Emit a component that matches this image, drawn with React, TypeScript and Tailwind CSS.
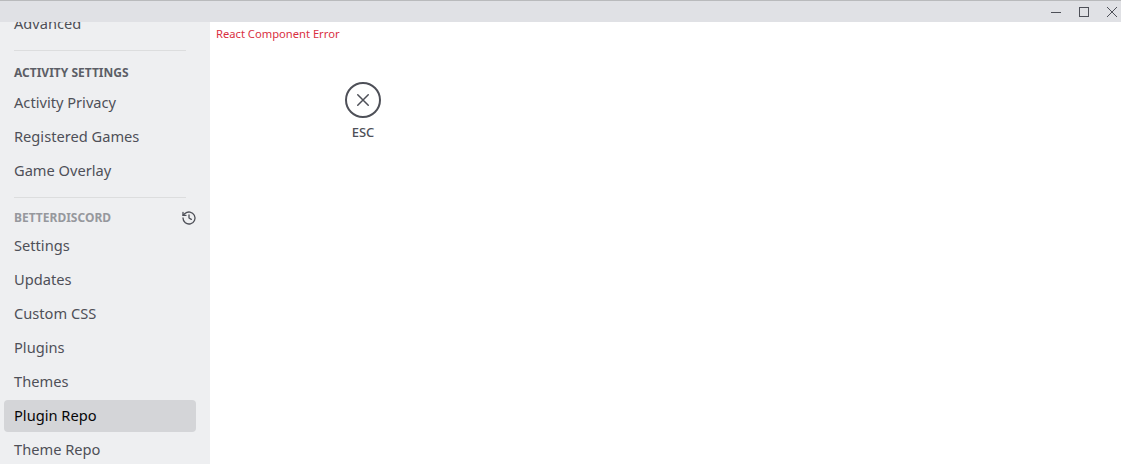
import React from 'react';

const NavItem: React.FC<{ label: string; active?: boolean }> = ({ label, active }) => (
  <div
    className={`h-8 mb-0.5 mr-3.5 ml-1 pl-2.5 pb-px flex items-center rounded text-[14.65px] shrink-0 ${
      active ? 'bg-[#d4d5d8] text-[#060607]' : 'text-[#4e5058]'
    }`}
  >
    {label}
  </div>
);

export default function App() {
  return (
    <div className="w-[1121px] h-[464px] flex flex-col overflow-hidden bg-white font-['Noto_Sans',sans-serif]">
      {/* Barre de titre */}
      <div className="h-[22px] shrink-0 bg-[#e0e1e5] border-t border-[#b9babc] flex items-center justify-end">
        <svg className="w-[10px] h-[10px] mr-[18px]" viewBox="0 0 10 10" fill="none" stroke="#4e5058" strokeWidth="1">
          <path d="M0 5.5h10" />
        </svg>
        <svg className="w-[10px] h-[10px] mr-[18px]" viewBox="0 0 10 10" fill="none" stroke="#4e5058" strokeWidth="1">
          <rect x="0.5" y="0.5" width="9" height="9" />
        </svg>
        <svg className="w-[10px] h-[10px] mr-1" viewBox="0 0 10 10" fill="none" stroke="#4e5058" strokeWidth="1">
          <path d="M0 0l10 10M10 0L0 10" />
        </svg>
      </div>

      <div className="flex flex-1 min-h-0">
        {/* Menu latéral */}
        <div className="w-[210px] shrink-0 bg-[#eeeff1] overflow-hidden flex flex-col">
          <div className="-mt-[14px]">
            <NavItem label="Advanced" />
          </div>
          <div className="h-px bg-[#dcddde] mx-3.5 mr-6 mt-2 shrink-0" />
          <div className="h-[12px] mt-4 mb-[7px] mx-3.5 flex items-center text-xs font-bold text-[#5c5e66] shrink-0">
            ACTIVITY SETTINGS
          </div>
          <div className="pt-px -mb-px">
            <NavItem label="Activity Privacy" />
            <NavItem label="Registered Games" />
            <NavItem label="Game Overlay" />
          </div>
          <div className="h-px bg-[#dcddde] mx-3.5 mr-6 mt-[9px] shrink-0" />
          <div className="h-[12px] mt-[14px] mb-[6px] ml-3.5 mr-3.5 flex items-center justify-between text-xs font-bold text-[#96989d] shrink-0">
            BETTERDISCORD
            <svg className="w-4 h-4 -mr-px" viewBox="0 0 24 24" fill="none" stroke="#4e5058" strokeWidth="2" strokeLinecap="round" strokeLinejoin="round">
              <path d="M3 12a9 9 0 1 0 3-6.7L3 8" />
              <path d="M3 3.5V8h4.5" />
              <path d="M12 7.5V12l3.5 2" />
            </svg>
          </div>
          <NavItem label="Settings" />
          <NavItem label="Updates" />
          <NavItem label="Custom CSS" />
          <NavItem label="Plugins" />
          <NavItem label="Themes" />
          <NavItem label="Plugin Repo" active />
          <NavItem label="Theme Repo" />
        </div>

        {/* Contenu */}
        <div className="flex-1 bg-white pl-1.5 pt-1.5">
          <div className="text-[11.2px] leading-[11px] text-[#d9303f]">React Component Error</div>
          <div className="w-9 mt-[43px] ml-[129px] flex flex-col items-center">
            <div className="w-9 h-9 shrink-0 rounded-full border-2 border-[#4e5058] flex items-center justify-center">
              <svg className="w-[18px] h-[18px]" viewBox="0 0 24 24" fill="none" stroke="#4e5058" strokeWidth="2" strokeLinecap="round">
                <path d="M5 5l14 14M19 5L5 19" />
              </svg>
            </div>
            <div className="mt-1.5 text-[13px] leading-4 font-medium text-[#4e5058]">ESC</div>
          </div>
        </div>
      </div>
    </div>
  );
}
